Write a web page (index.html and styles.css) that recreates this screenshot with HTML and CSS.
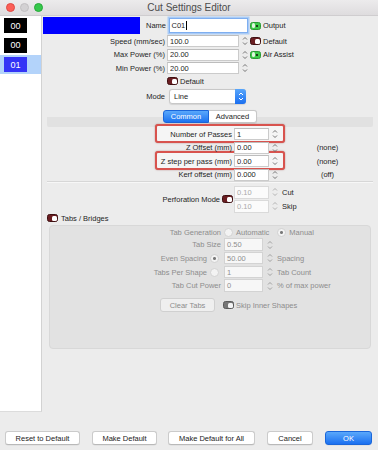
FILE: index.html
```html
<!DOCTYPE html>
<html>
<head>
<meta charset="utf-8">
<title>Cut Settings Editor</title>
<link rel="stylesheet" href="styles.css">
</head>
<body>
<div class="window">
  <div class="titlebar">
    <div class="lights"><span class="light red"></span><span class="light gray"></span><span class="light green"></span></div>
    <div class="title">Cut Settings Editor</div>
    <div></div>
  </div>

  <div class="main">
    <div class="sidebar">
      <div class="item i1"><span class="chip">00</span></div>
      <div class="item i2"><span class="chip">00</span></div>
      <div class="item i3 sel"><span class="chip blue">01</span></div>
    </div>

    <div class="content">
      <div class="topform">
        <div class="lab namelab"><span class="swatch"></span><span>Name</span></div>
        <div class="namebox">C01<span class="caret"></span></div>
        <div class="extra"><span class="sw on"></span><span>Output</span></div>

        <div class="lab">Speed (mm/sec)</div>
        <div class="inp">100.0</div>
        <div class="step"><svg width="6" height="12" viewBox="0 0 6 12"><path d="M1 4.5 L3 2.5 L5 4.5 M1 7.5 L3 9.5 L5 7.5" fill="none" stroke="#666" stroke-width="0.9"/></svg></div>
        <div class="extra"><span class="sw red"></span><span>Default</span></div>

        <div class="lab">Max Power (%)</div>
        <div class="inp">20.00</div>
        <div class="step"><svg width="6" height="12" viewBox="0 0 6 12"><path d="M1 4.5 L3 2.5 L5 4.5 M1 7.5 L3 9.5 L5 7.5" fill="none" stroke="#666" stroke-width="0.9"/></svg></div>
        <div class="extra"><span class="sw on"></span><span>Air Assist</span></div>

        <div class="lab">Min Power (%)</div>
        <div class="inp">20.00</div>
        <div class="step"><svg width="6" height="12" viewBox="0 0 6 12"><path d="M1 4.5 L3 2.5 L5 4.5 M1 7.5 L3 9.5 L5 7.5" fill="none" stroke="#666" stroke-width="0.9"/></svg></div>
        <div></div>

        <div></div>
        <div class="deflt"><span class="sw red"></span><span>Default</span></div>

        <div class="lab modelab">Mode</div>
        <div class="select"><span class="seltext">Line</span><span class="selbtn"><svg width="6" height="11" viewBox="0 0 6 11"><path d="M1 4 L3 2 L5 4 M1 7 L3 9 L5 7" fill="none" stroke="#fff" stroke-width="1"/></svg></span></div>
      </div>

      <div class="tabbar">
        <span class="tab active">Common</span><span class="tab">Advanced</span>
      </div>

      <div class="passes">
        <div class="prow hl">
          <div class="plab">Number of Passes</div>
          <div class="inp">1</div>
          <div class="step"><svg width="6" height="12" viewBox="0 0 6 12"><path d="M1 4.5 L3 2.5 L5 4.5 M1 7.5 L3 9.5 L5 7.5" fill="none" stroke="#666" stroke-width="0.9"/></svg></div>
          <div class="pext"></div>
        </div>
        <div class="prow r2">
          <div class="plab">Z Offset (mm)</div>
          <div class="inp">0.00</div>
          <div class="step"><svg width="6" height="12" viewBox="0 0 6 12"><path d="M1 4.5 L3 2.5 L5 4.5 M1 7.5 L3 9.5 L5 7.5" fill="none" stroke="#666" stroke-width="0.9"/></svg></div>
          <div class="pext">(none)</div>
        </div>
        <div class="prow hl">
          <div class="plab">Z step per pass (mm)</div>
          <div class="inp">0.00</div>
          <div class="step"><svg width="6" height="12" viewBox="0 0 6 12"><path d="M1 4.5 L3 2.5 L5 4.5 M1 7.5 L3 9.5 L5 7.5" fill="none" stroke="#666" stroke-width="0.9"/></svg></div>
          <div class="pext">(none)</div>
        </div>
        <div class="prow r2">
          <div class="plab">Kerf offset (mm)</div>
          <div class="inp">0.000</div>
          <div class="step"><svg width="6" height="12" viewBox="0 0 6 12"><path d="M1 4.5 L3 2.5 L5 4.5 M1 7.5 L3 9.5 L5 7.5" fill="none" stroke="#666" stroke-width="0.9"/></svg></div>
          <div class="pext">(off)</div>
        </div>
      </div>

      <div class="sep"></div>

      <div class="perf">
        <div class="perflab"><span>Perforation Mode</span><span class="sw red"></span></div>
        <div class="inp dis">0.10</div>
        <div class="step"><svg width="6" height="12" viewBox="0 0 6 12"><path d="M1 4.5 L3 2.5 L5 4.5 M1 7.5 L3 9.5 L5 7.5" fill="none" stroke="#aaa" stroke-width="0.9"/></svg></div>
        <div class="pext2">Cut</div>
        <div class="inp dis">0.10</div>
        <div class="step"><svg width="6" height="12" viewBox="0 0 6 12"><path d="M1 4.5 L3 2.5 L5 4.5 M1 7.5 L3 9.5 L5 7.5" fill="none" stroke="#aaa" stroke-width="0.9"/></svg></div>
        <div class="pext2">Skip</div>
      </div>

      <div class="tbrow"><span class="sw red"></span><span>Tabs / Bridges</span></div>

      <div class="group">
        <div class="ggrid">
          <div class="glab">Tab Generation</div>
          <div class="gen"><span class="radio"></span><span class="rtext">Automatic</span><span class="radio chk r2"></span><span class="rtext">Manual</span></div>

          <div class="glab">Tab Size</div>
          <div class="inp gin">0.50</div>
          <div class="step"><svg width="6" height="12" viewBox="0 0 6 12"><path d="M1 4.5 L3 2.5 L5 4.5 M1 7.5 L3 9.5 L5 7.5" fill="none" stroke="#999" stroke-width="0.9"/></svg></div>
          <div></div>

          <div class="glab"><span>Even Spacing</span><span class="radio chk rr"></span></div>
          <div class="inp gin">50.00</div>
          <div class="step"><svg width="6" height="12" viewBox="0 0 6 12"><path d="M1 4.5 L3 2.5 L5 4.5 M1 7.5 L3 9.5 L5 7.5" fill="none" stroke="#999" stroke-width="0.9"/></svg></div>
          <div class="gext">Spacing</div>

          <div class="glab"><span>Tabs Per Shape</span><span class="radio rr"></span></div>
          <div class="inp gin">1</div>
          <div class="step"><svg width="6" height="12" viewBox="0 0 6 12"><path d="M1 4.5 L3 2.5 L5 4.5 M1 7.5 L3 9.5 L5 7.5" fill="none" stroke="#999" stroke-width="0.9"/></svg></div>
          <div class="gext">Tab Count</div>

          <div class="glab">Tab Cut Power</div>
          <div class="inp gin">0</div>
          <div class="step"><svg width="6" height="12" viewBox="0 0 6 12"><path d="M1 4.5 L3 2.5 L5 4.5 M1 7.5 L3 9.5 L5 7.5" fill="none" stroke="#999" stroke-width="0.9"/></svg></div>
          <div class="gext">% of max power</div>
        </div>
        <div class="clearrow">
          <span class="gbtn">Clear Tabs</span>
          <span class="sw gray"></span><span class="skip">Skip Inner Shapes</span>
        </div>
      </div>
    </div>
  </div>

  <div class="footer">
    <span class="btn b1">Reset to Default</span>
    <span class="btn b2">Make Default</span>
    <span class="btn b3">Make Default for All</span>
    <span class="btn b4">Cancel</span>
    <span class="btn ok">OK</span>
  </div>
</div>
</body>
</html>
```

FILE: styles.css
```css
* { box-sizing: border-box; }
html, body { margin: 0; padding: 0; }
body {
  width: 378px;
  height: 450px;
  overflow: hidden;
  background: #ececec;
  font-family: "Liberation Sans", Arial, sans-serif;
  font-size: 7.5px;
  color: #1e1e1e;
}
.window { width: 378px; height: 450px; display: flex; flex-direction: column; }

/* title bar */
.titlebar {
  height: 16px;
  flex: none;
  display: grid;
  grid-template-columns: 1fr auto 1fr;
  align-items: center;
  background: linear-gradient(#ecebec, #dedcde);
  border-bottom: 1px solid #cfcdcf;
}
.lights { display: flex; gap: 5px; padding-left: 5.5px; }
.light { width: 9px; height: 9px; border-radius: 50%; }
.light.red { background: #fc5f57; border: 0.5px solid #df4a44; }
.light.gray { background: #d3d1d3; border: 0.5px solid #c2c0c2; }
.light.green { background: #35c84b; border: 0.5px solid #27a83a; }
.title { font-size: 10px; color: #4b4b4b; line-height: 12px; }

/* main */
.main { height: 396px; flex: none; display: flex; }
.sidebar {
  width: 42px;
  flex: none;
  background: #fff;
  border-right: 1px solid #d2d2d2;
  border-bottom: 1px solid #dcdcdc;
}
.item { display: flex; align-items: center; padding-left: 4px; }
.i1 { height: 19px; }
.i2 { height: 20px; }
.i3 { height: 19px; }
.item.sel { background: #b3d3fa; }
.chip {
  width: 23px; height: 15px;
  background: #000; color: #fff;
  font-size: 9px;
  display: flex; align-items: center; justify-content: center;
}
.chip.blue { background: #3434f6; }

.content { flex: 1; display: flex; flex-direction: column; }

/* top form */
.topform {
  display: grid;
  grid-template-columns: 125px 72px 11px 1fr;
  grid-template-rows: 17px 14px 13px 14px 12px 18px;
  align-items: center;
  padding-top: 1px;
}
.lab { text-align: right; padding-right: 2px; white-space: nowrap; }
.namelab { display: flex; justify-content: space-between; align-items: center; padding-left: 1px; padding-right: 1px; height: 17px; }
.swatch { width: 97px; height: 17px; background: #0000fe; }
.namebox {
  grid-column: 2 / 4;
  margin-left: 1.5px; margin-right: 2px;
  height: 15px;
  background: #fff;
  border: 1px solid #7eaef0;
  box-shadow: 0 0 0 1.5px #a9cbf6;
  display: flex; align-items: center;
  padding-left: 2px;
}
.caret { width: 1px; height: 9px; background: #000; margin-left: 1px; }
.inp {
  height: 12px;
  background: #fff;
  border: 1px solid #cbcbcb;
  border-top-color: #bdbdbd;
  padding-left: 2px;
  display: flex; align-items: center;
  white-space: nowrap;
}
.step { display: flex; justify-content: center; align-items: center; height: 12px; }
.extra { display: flex; align-items: center; gap: 2px; }
.deflt { grid-column: 2 / 5; display: flex; align-items: center; gap: 2px; }
.modelab { align-self: end; height: 15px; line-height: 15px; margin-bottom: 1px; }
.select {
  grid-column: 2 / 4;
  align-self: end;
  margin-bottom: 1px;
  margin-left: 2px;
  width: 77px; height: 15px;
  background: #fff;
  border: 1px solid #c8c8c8;
  border-radius: 3px;
  display: flex; align-items: center; justify-content: space-between;
  box-shadow: 0 0.5px 1px rgba(0,0,0,0.1);
}
.seltext { padding-left: 4px; }
.selbtn {
  width: 11px; height: 15px;
  margin: -1px -1px -1px 0;
  background: linear-gradient(#58a6fb, #1b6ff0);
  border-radius: 0 3px 3px 0;
  display: flex; align-items: center; justify-content: center;
}

/* toggles */
.sw {
  width: 11px; height: 8px;
  border-radius: 2.5px;
  flex: none;
  display: inline-flex;
  align-items: center;
  padding: 0.5px;
}
.sw.red { background: #6b1e22; border: 1px solid #3f1012; justify-content: flex-end; }
.sw.red::after { content: ""; width: 4.5px; height: 5px; background: #fff; border-radius: 1.5px; }
.sw.gray { background: #767676; border: 1px solid #5a5a5a; justify-content: flex-end; }
.sw.gray::after { content: ""; width: 4.5px; height: 5px; background: #f4f4f4; border-radius: 1.5px; }
.sw.on {
  background: radial-gradient(circle at 5.8px 3px, #1d3a1d 0 1px, transparent 1.4px), #3dca4a;
  border: 1px solid #2a9a36;
  justify-content: flex-start;
}
.sw.on::after { content: ""; width: 3.5px; height: 5px; background: #dff6df; border-radius: 1.5px; }

/* tab bar */
.tabbar {
  margin: 5px 5px 0 5px;
  height: 17px;
  display: flex;
  justify-content: center;
  align-items: flex-start;
  background: linear-gradient(to bottom, transparent 7px, #e1e1e1 7px);
  border-radius: 2px;
}
.tab {
  height: 13px;
  display: flex; align-items: center; justify-content: center;
  font-size: 7.5px;
}
.tab.active {
  width: 46px;
  background: linear-gradient(#5aa8fb, #1c73f1);
  color: #fff;
  border: 1px solid #1a66da;
  border-radius: 3px 0 0 3px;
}
.tab:not(.active) {
  width: 48px;
  background: #fff;
  border: 1px solid #c8c8c8;
  border-left: none;
  border-radius: 0 3px 3px 0;
  box-shadow: 0 0.5px 1px rgba(0,0,0,0.08);
}

/* passes */
.passes { display: flex; flex-direction: column; }
.prow {
  display: grid;
  grid-template-columns: 192px 35px 11px 1fr;
  height: 14px;
  align-items: center;
  position: relative;
}
.prow.r2 { height: 13px; }
.prow > * { position: relative; z-index: 1; }
.prow.hl::before {
  content: "";
  position: absolute;
  left: 113px; right: 93px;
  top: -3px; bottom: -2px;
  border: 2px solid #d8534e;
  border-radius: 3px;
  background: #f5f5f5;
  box-shadow: 0 0 1.5px rgba(120,0,0,0.5);
  z-index: 0;
}
.plab { text-align: right; padding-right: 2px; white-space: nowrap; }
.pext { text-align: center; padding-right: 3px; }
.sep {
  margin: 0 5px;
  border-top: 1px solid #d7d7d7;
  border-bottom: 1px solid #f7f7f7;
}

/* perforation */
.perf {
  margin-top: 2px;
  display: grid;
  grid-template-columns: 192px 35px 11px 1fr;
  grid-template-rows: 14px 14px;
  align-items: center;
}
.perflab {
  grid-row: 1 / 3;
  display: flex; align-items: center; justify-content: flex-end;
  gap: 2px;
  padding-right: 1px;
}
.inp.dis { background: #fbfbfb; border-color: #dadada; color: #a9a9a9; height: 13px; }
.pext2 { padding-left: 2px; }

.tbrow { height: 10px; margin-left: 5px; display: flex; align-items: center; gap: 3px; }

/* group */
.group {
  margin: 2px 7px 0 7px;
  height: 124px;
  background: #e2e2e2;
  border: 1px solid #d8d8d8;
  border-radius: 4px;
  color: #8d8d8d;
}
.ggrid {
  display: grid;
  grid-template-columns: 174px 39px 13px 1fr;
  grid-template-rows: 12px 13px 14px 14px 13px;
  align-items: center;
}
.glab { display: flex; justify-content: flex-end; align-items: center; padding-right: 3px; gap: 3px; white-space: nowrap; }
.gen { grid-column: 2 / 5; display: flex; align-items: center; }
.radio {
  width: 9px; height: 9px;
  border-radius: 50%;
  background: #f3f3f3;
  border: 1px solid #d3d3d3;
  flex: none;
}
.radio.chk { background: radial-gradient(circle, #7a7a7a 0 1.3px, #f3f3f3 1.6px); }
.radio.rr { margin-right: 2px; }
.radio.r2 { margin-left: 8px; }
.rtext { margin-left: 3px; }
.inp.gin { background: #f7f7f7; border-color: #d3d3d3; color: #8f8f8f; height: 12.5px; }
.gext { padding-left: 1px; white-space: nowrap; }
.clearrow { display: flex; align-items: center; margin-top: 6px; padding-left: 110px; height: 14px; }
.gbtn {
  width: 55px; height: 14px;
  background: #efefef;
  border: 1px solid #d0d0d0;
  border-radius: 3px;
  display: flex; align-items: center; justify-content: center;
  margin-right: 8px;
}
.skip { margin-left: 2px; }

/* footer */
.footer { height: 38px; flex: none; padding: 19px 0 0 5px; display: flex; align-items: flex-start; }
.btn {
  height: 14px;
  background: #fff;
  border: 1px solid #cbcbcb;
  border-bottom-color: #b9b9b9;
  border-radius: 3px;
  display: flex; align-items: center; justify-content: center;
  color: #222;
  box-shadow: 0 0.5px 0.5px rgba(0,0,0,0.08);
  white-space: nowrap;
}
.b1 { width: 75px; }
.b2 { width: 65px; margin-left: 12px; }
.b3 { width: 87px; margin-left: 11px; }
.b4 { width: 46px; margin-left: 12px; }
.ok {
  width: 47px; margin-left: 12px;
  background: linear-gradient(#5aa8fb, #1b70f0);
  border-color: #1a66da;
  color: #fff;
}
```
